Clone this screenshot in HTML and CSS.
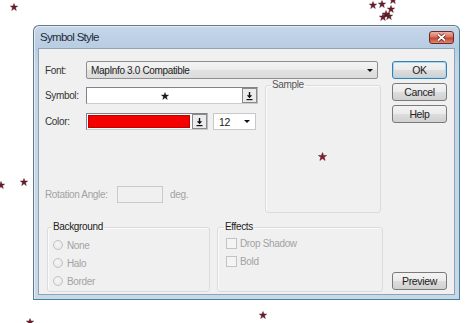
FILE: index.html
```html
<!DOCTYPE html>
<html>
<head>
<meta charset="utf-8">
<link rel="stylesheet" href="styles.css">
</head>
<body>
<svg width="0" height="0" class="defs">
  <defs>
    <symbol id="st" viewBox="0 0 10 10">
      <path d="M5 0.6 L6.2 3.8 L9.6 3.8 L6.9 5.9 L7.9 9.4 L5 7.3 L2.1 9.4 L3.1 5.9 L0.4 3.8 L3.8 3.8 Z"/>
    </symbol>
    <symbol id="dd" viewBox="0 0 9 10">
      <path d="M4.5 1 V5" stroke="#111" stroke-width="1.4" fill="none"/>
      <path d="M1.8 4.3 H7.2 L4.5 7.2 Z" fill="#111"/>
      <path d="M1.5 8.6 H7.5" stroke="#111" stroke-width="1.2"/>
    </symbol>
  </defs>
</svg>
<div class="map">
  <svg class="star" style="left:10px;top:3px"><use href="#st"/></svg>
  <svg class="star" style="left:369px;top:1px"><use href="#st"/></svg>
  <svg class="star" style="left:378px;top:0px"><use href="#st"/></svg>
  <svg class="star" style="left:389px;top:-4px"><use href="#st"/></svg>
  <svg class="star" style="left:387px;top:5px"><use href="#st"/></svg>
  <svg class="star" style="left:382px;top:10px"><use href="#st"/></svg>
  <svg class="star" style="left:385px;top:12px"><use href="#st"/></svg>
  <svg class="star" style="left:379px;top:13px"><use href="#st"/></svg>
  <svg class="star" style="left:-3px;top:181px"><use href="#st"/></svg>
  <svg class="star" style="left:20px;top:178px"><use href="#st"/></svg>
  <svg class="star" style="left:26px;top:318px"><use href="#st"/></svg>
  <svg class="star" style="left:259px;top:311px"><use href="#st"/></svg>

  <div class="dialog">
    <div class="titlebar">
      <span class="title">Symbol Style</span>
      <span class="close">
        <svg width="11" height="9" viewBox="0 0 11 9"><path d="M2 1.5 L9 7.5 M9 1.5 L2 7.5" stroke="#5a1a12" stroke-width="3.2"/><path d="M2 1.5 L9 7.5 M9 1.5 L2 7.5" stroke="#fff" stroke-width="1.8"/></svg>
      </span>
    </div>
    <div class="client">
      <div class="main">
        <div class="row">
          <span class="label">Font:</span>
          <div class="combo font-combo"><span>MapInfo 3.0 Compatible</span><span class="arrow"></span></div>
        </div>
        <div class="middle">
          <div class="leftcol">
            <div class="row">
              <span class="label">Symbol:</span>
              <div class="field symbol-field">
                <span class="sym-cell"><svg class="sym-star"><use href="#st"/></svg></span>
                <span class="ddbtn"><svg width="9" height="10"><use href="#dd"/></svg></span>
              </div>
            </div>
            <div class="row color-row">
              <span class="label">Color:</span>
              <div class="field color-field">
                <span class="swatch"></span>
                <span class="ddbtn"><svg width="9" height="10"><use href="#dd"/></svg></span>
              </div>
              <div class="combo size-combo"><span>12</span><span class="arrow"></span></div>
            </div>
            <div class="row rot-row">
              <span class="label dis rot-label">Rotation Angle:</span>
              <span class="rot-input"></span>
              <span class="dis deg">deg.</span>
            </div>
          </div>
          <fieldset class="group sample">
            <legend>Sample</legend>
            <div class="sample-area"><svg class="sample-star"><use href="#st"/></svg></div>
          </fieldset>
        </div>
        <div class="bottom">
          <fieldset class="group bg">
            <legend>Background</legend>
            <div class="opt"><span class="radio"></span><span class="dis">None</span></div>
            <div class="opt"><span class="radio"></span><span class="dis">Halo</span></div>
            <div class="opt"><span class="radio"></span><span class="dis">Border</span></div>
          </fieldset>
          <fieldset class="group fx">
            <legend>Effects</legend>
            <div class="opt"><span class="check"></span><span class="dis">Drop Shadow</span></div>
            <div class="opt"><span class="check"></span><span class="dis">Bold</span></div>
          </fieldset>
        </div>
      </div>
      <div class="buttons">
        <div class="btn default">OK</div>
        <div class="btn">Cancel</div>
        <div class="btn">Help</div>
        <div class="btn preview">Preview</div>
      </div>
    </div>
  </div>
</div>
</body>
</html>
```

FILE: styles.css
```css
* { box-sizing: border-box; }
html, body { margin: 0; background: #fff; }
body {
  font-family: "Liberation Sans", Arial, sans-serif;
  font-size: 10px;
  letter-spacing: -0.35px;
  color: #262626;
}
.defs { position: absolute; }
.map {
  position: relative;
  width: 474px;
  height: 323px;
  overflow: hidden;
  padding: 25px 0 0 33px;
}
.star {
  position: absolute;
  width: 8px;
  height: 8px;
  fill: #6e1c2b;
  stroke: #3a0c14;
  stroke-width: 0.5;
}
.dialog {
  width: 427px;
  height: 275px;
  border: 1px solid #60788a;
  border-right-color: #3f8494;
  border-bottom-color: #3f8494;
  border-radius: 6px 6px 0 0;
  background: linear-gradient(#c6d7ea, #b8cce2 22px, #c4d5e7 40px, #c9d8e8);
  padding: 0 4px 4px 4px;
  display: flex;
  flex-direction: column;
  box-shadow: inset 1px 1px 0 #e3ecf5;
}
.titlebar {
  height: 22px;
  display: flex;
  align-items: center;
  justify-content: space-between;
  padding: 0 1px 0 2px;
}
.title {
  font-size: 11.5px;
  color: #1d2b3a;
  letter-spacing: -0.7px;
}
.close {
  width: 25px;
  height: 13px;
  border: 1px solid #6b2b22;
  border-radius: 3px;
  background: linear-gradient(#eab2a4, #d9735f 45%, #c5432d 55%, #d98a75);
  display: flex;
  align-items: center;
  justify-content: center;
}
.client {
  flex: 1;
  background: #f0f0f0;
  border: 1px solid #8fa3b6;
  display: flex;
  gap: 9px;
  padding: 12px 7px 2px 6px;
}
.main {
  width: 338px;
  display: flex;
  flex-direction: column;
}
.row {
  display: flex;
  align-items: center;
  height: 18px;
}
.label {
  width: 41px;
  flex: none;
  color: #333;
}
.dis { color: #a3a3a3; }
.combo {
  height: 18px;
  display: flex;
  align-items: center;
  justify-content: space-between;
  border: 1px solid #8e8f8f;
  border-radius: 2px;
  padding: 0 4px 0 4px;
  color: #222;
}
.font-combo {
  width: 292px;
  background: linear-gradient(#f4f4f4, #ececec 50%, #e2e2e2 51%, #dcdcdc);
}
.arrow {
  width: 0;
  height: 0;
  border-left: 3px solid transparent;
  border-right: 3px solid transparent;
  border-top: 3px solid #111;
}
.middle {
  display: flex;
  height: 134px;
}
.leftcol {
  width: 213px;
  display: flex;
  flex-direction: column;
  padding: 8px 0 10px 0;
}
.leftcol .row { height: 17px; }
.field {
  height: 17px;
  display: flex;
  align-items: stretch;
  background: #fff;
  border: 1px solid #7f848c;
  border-right-color: #b9bcc2;
  border-bottom-color: #c9ccd2;
}
.symbol-field { width: 172px; }
.sym-cell {
  flex: 1;
  display: flex;
  align-items: center;
  justify-content: center;
}
.sym-star {
  width: 8px;
  height: 8px;
  fill: #1c1c1c;
  stroke: #000;
  stroke-width: 0.4;
}
.ddbtn {
  width: 15px;
  flex: none;
  display: flex;
  align-items: center;
  justify-content: center;
  border: 1px solid #8a8a8a;
  background: #ececec;
}
.color-row { margin-top: 9px; }
.color-field { width: 122px; }
.swatch {
  flex: 1;
  margin: 1px 2px 1px 1px;
  background: #f50000;
  border: 1px solid #c10000;
}
.size-combo {
  width: 43px;
  height: 17px;
  margin-left: 5px;
  background: #fff;
  border-color: #c5c8cd;
  border-radius: 0;
  padding: 0 5px 0 5px;
  font-size: 10.5px;
}
.rot-row { margin-top: auto; }
.rot-label { width: 72px; }
.rot-input {
  width: 46px;
  height: 17px;
  border: 1px solid #c8cace;
  background: #f0f0f0;
}
.deg { margin-left: 7px; }
.group {
  margin: 0;
  min-width: 0;
  border: 1px solid #d9dcdf;
  border-radius: 3px;
  box-shadow: inset 1px 1px 0 #fbfbfb;
}
.group legend {
  padding: 0 1px;
  margin-left: -1px;
  line-height: 12px;
  color: #222;
}
.sample {
  width: 116px;
  margin: 0 0 0 7px;
  padding: 0 6px;
  height: 134px;
}
.sample legend { color: #555; }
.sample-area {
  position: relative;
  height: 100%;
}
.sample-star {
  position: absolute;
  left: 46px;
  top: 61px;
  width: 9px;
  height: 9px;
  fill: #8a1a2c;
  stroke: #4a0d17;
  stroke-width: 0.5;
}
.bottom {
  display: flex;
  gap: 7px;
  margin-top: 8px;
  padding-left: 2px;
  height: 71px;
}
.bg {
  width: 163px;
  padding: 3px 5px 0 5px;
}
.fx {
  width: 166px;
  padding: 1px 8px 0 8px;
}
.fx legend { margin-left: -2px; }
.opt {
  height: 18px;
  display: flex;
  align-items: center;
}
.radio {
  width: 10px;
  height: 10px;
  border-radius: 50%;
  border: 1px solid #c3c3c3;
  background: radial-gradient(circle at 40% 40%, #f7f7f7, #e2e2e2);
  margin-right: 4px;
}
.check {
  width: 11px;
  height: 11px;
  border: 1px solid #c3c3c3;
  background: #f4f4f4;
  margin-right: 3px;
}
.buttons {
  width: 55px;
  display: flex;
  flex-direction: column;
  gap: 4px;
}
.btn {
  height: 18px;
  display: flex;
  align-items: center;
  justify-content: center;
  border: 1px solid #7a7a7a;
  border-radius: 3px;
  background: linear-gradient(#f3f3f3, #ebebeb 50%, #dddddd 51%, #d0d0d0);
  color: #222;
  font-size: 10.5px;
}
.btn.default {
  border-color: #3b7fb0;
  box-shadow: inset 0 0 0 1px #a8d8f0;
}
.btn.preview {
  margin-top: auto;
  margin-bottom: 2px;
}
```
